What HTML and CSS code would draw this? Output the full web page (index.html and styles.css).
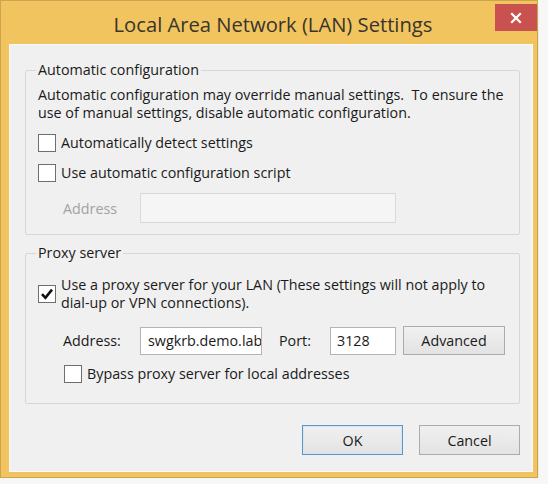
FILE: index.html
```html
<!DOCTYPE html>
<html>
	<head>
		<meta charset="utf-8" />
		<title>Local Area Network (LAN) Settings</title>
		<link rel="stylesheet" href="styles.css">
	</head>
	<body>
		<div class="window">
			<div class="titlebar">
				<span class="title">Local Area Network (LAN) Settings</span>
				<a class="close">
					<svg width="12" height="12" viewBox="0 0 12 12"><path d="M2 2 L10 10 M10 2 L2 10" stroke="#fff" stroke-width="2.2" stroke-linecap="square"/></svg>
				</a>
			</div>
			<div class="client">
				<fieldset class="group auto">
					<legend>Automatic configuration</legend>
					<p class="desc">Automatic configuration may override manual settings.&nbsp; To ensure the<br>use of manual settings, disable automatic configuration.</p>
					<label class="check"><span class="box"></span><span>Automatically detect settings</span></label>
					<label class="check"><span class="box"></span><span>Use automatic configuration script</span></label>
					<div class="field disabled">
						<span class="lbl">Address</span>
						<span class="ipt ipt-script"></span>
					</div>
				</fieldset>
				<fieldset class="group proxy">
					<legend>Proxy server</legend>
					<label class="check multi">
						<span class="box checked">
							<svg width="16" height="16" viewBox="0 0 16 16"><path d="M3 8.2 L6.4 11.8 L13 3.6" fill="none" stroke="#111" stroke-width="2.6"/></svg>
						</span>
						<span>Use a proxy server for your LAN (These settings will not apply to<br>dial-up or VPN connections).</span>
					</label>
					<div class="field">
						<span class="lbl">Address:</span>
						<span class="ipt ipt-addr">swgkrb.demo.lab</span>
						<span class="lbl-port">Port:</span>
						<span class="ipt ipt-port">3128</span>
						<a class="btn advanced">Advanced</a>
					</div>
					<label class="check indent"><span class="box"></span><span>Bypass proxy server for local addresses</span></label>
				</fieldset>
				<div class="buttons">
					<a class="btn btn-default">OK</a>
					<a class="btn">Cancel</a>
				</div>
			</div>
		</div>
	</body>
</html>
```

FILE: styles.css
```css
*{
	margin: 0;
	padding: 0;
	box-sizing: border-box;
}
body{
	background-color: #f7f7f5;
	font-family: "Open Sans", "Noto Sans", sans-serif;
	font-size: 14.3px;
	color: #1a1a1a;
}
a{
	text-decoration: none;
	color: inherit;
}
/*窗口*/
.window{
	width: 538px;
	height: 478px;
	display: flex;
	flex-direction: column;
	padding: 0 4px 5px 8px;
	background-color: #f1c45f;
	border: 1px solid #caa550;
	box-shadow: 0 5px 2px -1px rgba(70, 70, 70, .85);
}
.titlebar{
	height: 43px;
	position: relative;
	display: flex;
	align-items: center;
	justify-content: center;
	padding-top: 2px;
}
.title{
	font-size: 20.2px;
	color: #38352d;
	margin-left: 4px;
}
.close{
	position: absolute;
	top: 3px;
	right: -4px;
	width: 42px;
	height: 27px;
	display: flex;
	align-items: center;
	justify-content: center;
	background-color: #c9514f;
}
.client{
	flex: 1;
	display: flex;
	flex-direction: column;
	padding: 16px 12px 0 15px;
	background-color: #f0f0f0;
	border: 1px solid #fafafa;
}
/*分组*/
.group{
	border: 1px solid #d7d7d7;
	border-radius: 2px;
	padding: 7px 11px 11px 12px;
}
.group legend{
	line-height: 18px;
	padding: 0 2px;
	margin-left: -2px;
}
.group.proxy{
	margin-top: 9px;
	padding-bottom: 20px;
}
.desc{
	line-height: 18px;
}
.check{
	display: flex;
	align-items: center;
	line-height: 18px;
	margin-top: 12px;
}
.check .box{
	width: 18px;
	height: 18px;
	flex: none;
	margin-right: 5px;
	display: flex;
	align-items: center;
	justify-content: center;
	background-color: #fff;
	border: 1px solid #6e6e6e;
}
.check.multi{
	margin-top: 7px;
}
.check.indent{
	margin-top: 10px;
	margin-left: 26px;
}
.field{
	display: flex;
	align-items: center;
	margin-top: 11px;
	padding-left: 25px;
}
.field .lbl{
	width: 77px;
}
.field.disabled .lbl{
	color: #a2a2a2;
}
.proxy .field{
	margin-top: 14px;
}
.ipt{
	height: 28px;
	line-height: 26px;
	padding: 0 6px;
	background-color: #fff;
	border: 1px solid #b4b4b4;
	overflow: hidden;
	white-space: nowrap;
}
.ipt-script{
	width: 256px;
	height: 30px;
	background-color: #f5f5f5;
	border-color: #d9d9d9;
}
.ipt-addr{
	width: 122px;
	padding: 0 0 0 7px;
}
.lbl-port{
	margin-left: 17px;
	width: 51px;
}
.ipt-port{
	width: 66px;
}
/*按钮*/
.btn{
	display: flex;
	align-items: center;
	justify-content: center;
	height: 30px;
	width: 101px;
	background: linear-gradient(#f0f0f0, #e3e3e3);
	border: 1px solid #acacac;
	cursor: pointer;
}
.btn.advanced{
	margin-left: 7px;
	width: 102px;
	height: 29px;
}
.btn-default{
	border-color: #5a97c9;
	box-shadow: inset 0 0 0 1px #d6e6f3;
}
.buttons{
	display: flex;
	justify-content: flex-end;
	gap: 16px;
	margin-top: 21px;
}
```
